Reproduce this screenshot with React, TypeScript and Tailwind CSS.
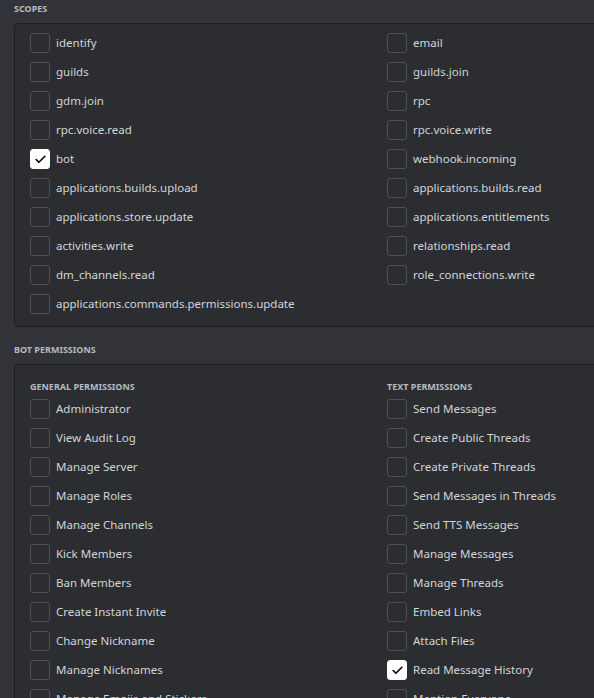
import { Check } from 'lucide-react';

const scopes: [string, boolean][] = [
  ['identify', false],
  ['email', false],
  ['guilds', false],
  ['guilds.join', false],
  ['gdm.join', false],
  ['rpc', false],
  ['rpc.voice.read', false],
  ['rpc.voice.write', false],
  ['bot', true],
  ['webhook.incoming', false],
  ['applications.builds.upload', false],
  ['applications.builds.read', false],
  ['applications.store.update', false],
  ['applications.entitlements', false],
  ['activities.write', false],
  ['relationships.read', false],
  ['dm_channels.read', false],
  ['role_connections.write', false],
  ['applications.commands.permissions.update', false],
];

const general: [string, boolean][] = [
  ['Administrator', false],
  ['View Audit Log', false],
  ['Manage Server', false],
  ['Manage Roles', false],
  ['Manage Channels', false],
  ['Kick Members', false],
  ['Ban Members', false],
  ['Create Instant Invite', false],
  ['Change Nickname', false],
  ['Manage Nicknames', false],
  ['Manage Emojis and Stickers', false],
];

const text: [string, boolean][] = [
  ['Send Messages', false],
  ['Create Public Threads', false],
  ['Create Private Threads', false],
  ['Send Messages in Threads', false],
  ['Send TTS Messages', false],
  ['Manage Messages', false],
  ['Manage Threads', false],
  ['Embed Links', false],
  ['Attach Files', false],
  ['Read Message History', true],
  ['Mention Everyone', false],
];

const CheckRow = ({ label, checked }: { label: string; checked: boolean }) => (
  <label className="flex h-5 items-center gap-[6px]">
    <span
      className={`flex h-5 w-5 shrink-0 items-center justify-center rounded-[3px] border ${
        checked ? 'border-white bg-white' : 'border-[#4e5058] bg-transparent'
      }`}
    >
      {checked && <Check size={13} strokeWidth={3} className="text-black" />}
    </span>
    <span className="whitespace-nowrap text-[11.5px] leading-5 text-[#d2d5d9]">{label}</span>
  </label>
);

const SectionTitle = ({ children }: { children: string }) => (
  <h2 className="text-[9px] font-bold uppercase leading-3 text-[#b5bac1]">{children}</h2>
);

const App = () => {
  return (
    <div
      className="h-[698px] w-[594px] overflow-hidden bg-[#313338] pl-[14px] pt-[3px]"
      style={{ fontFamily: '"Noto Sans", "Open Sans", sans-serif' }}
    >
      {/* scopes */}
      <SectionTitle>Scopes</SectionTitle>
      <div className="mt-[8px] w-[760px] rounded-[4px] border border-[#1e1f22] bg-[#2b2d31] pb-[12px] pl-[15px] pt-[9px]">
        <div className="grid grid-cols-[357px_357px] gap-y-[9px]">
          {scopes.map(([label, checked]) => (
            <CheckRow key={label} label={label} checked={checked} />
          ))}
        </div>
      </div>

      {/* bot permissions */}
      <div className="mt-[17px]">
        <SectionTitle>Bot Permissions</SectionTitle>
      </div>
      <div className="mt-[8px] w-[760px] rounded-[4px] border border-[#1e1f22] bg-[#2b2d31] pl-[15px] pt-[16px]">
        <div className="grid grid-cols-[357px_357px]">
          {[
            ['General Permissions', general],
            ['Text Permissions', text],
          ].map(([title, items]) => (
            <div key={title as string}>
              <SectionTitle>{title as string}</SectionTitle>
              <div className="mt-[6px] flex flex-col gap-y-[9px]">
                {(items as [string, boolean][]).map(([label, checked]) => (
                  <CheckRow key={label} label={label} checked={checked} />
                ))}
              </div>
            </div>
          ))}
        </div>
      </div>
    </div>
  );
};

export default App;
